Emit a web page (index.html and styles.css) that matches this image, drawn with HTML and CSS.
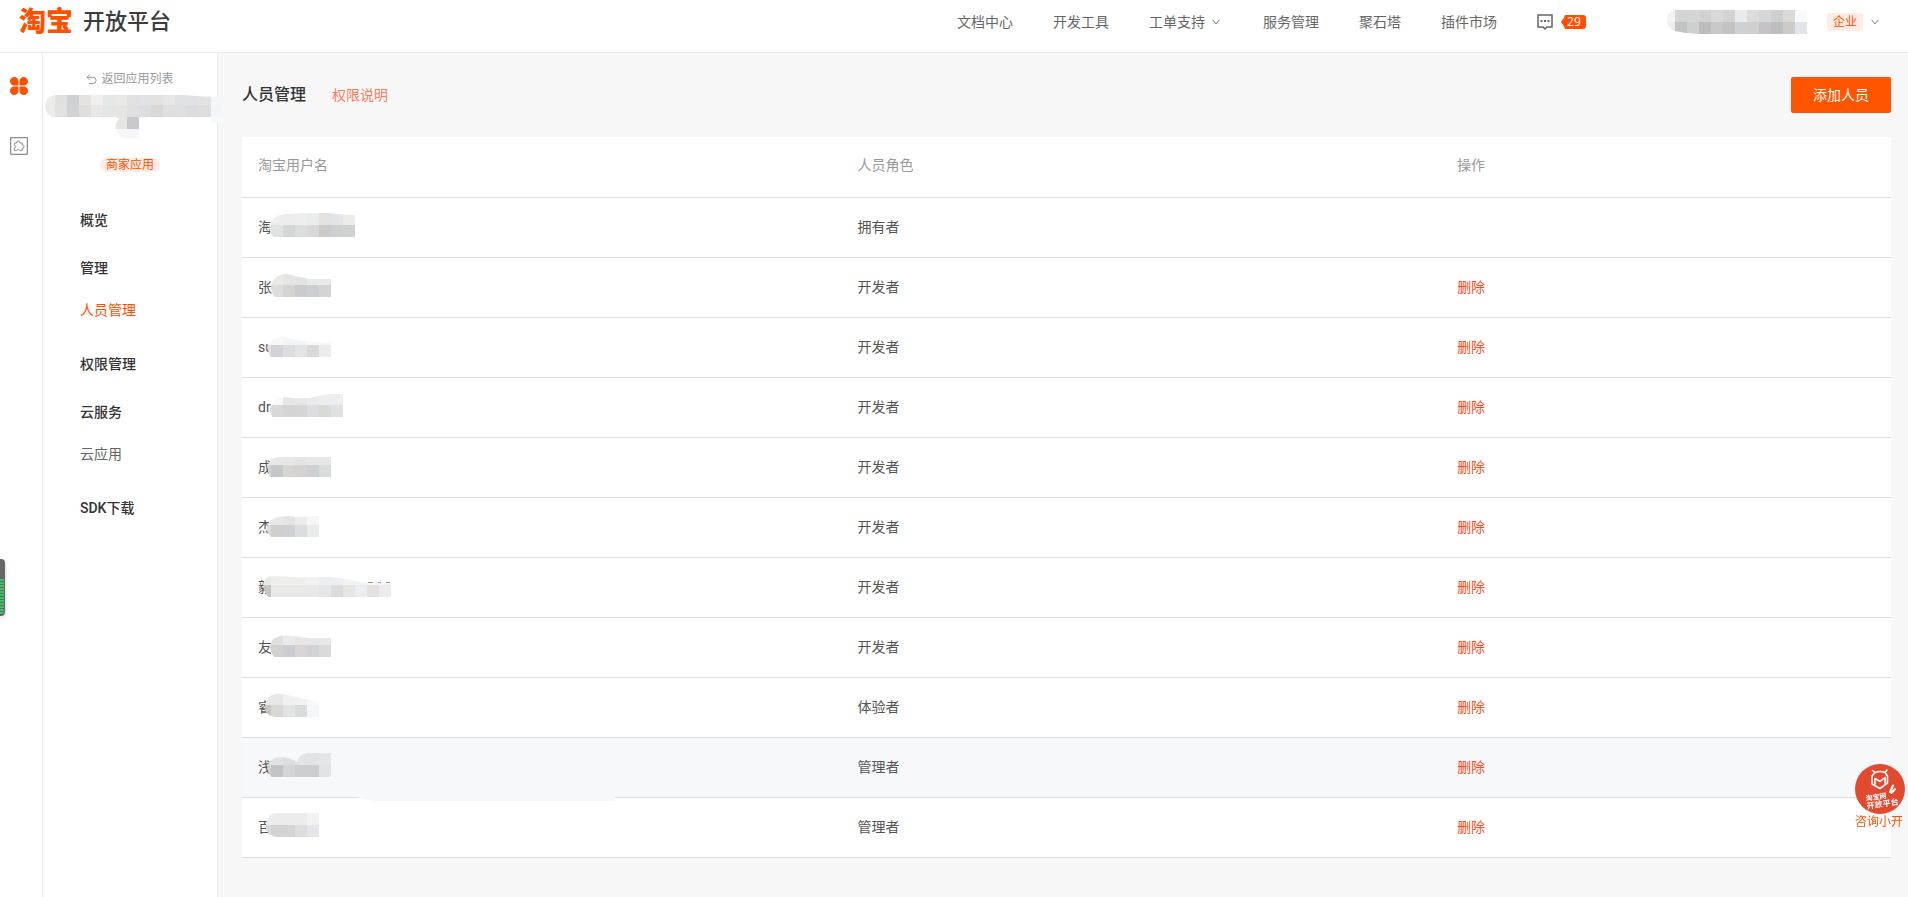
FILE: index.html
```html
<!DOCTYPE html>
<html lang="zh-CN">
<head>
<meta charset="utf-8">
<meta name="viewport" content="width=device-width, initial-scale=1">
<title>人员管理 - 淘宝开放平台</title>
<link rel="stylesheet" href="styles.css">
</head>
<body>
<header class="topbar">
  <a class="brand" href="#"><span class="brand-mark">淘宝</span><span class="brand-name">开放平台</span></a>
  <nav class="topnav" aria-label="主导航">
    <a href="#">文档中心</a>
    <a href="#">开发工具</a>
    <a href="#" class="has-arrow">工单支持<svg class="arrow" viewBox="0 0 8 6"><path d="M.5.8 4 4.8 7.5.8"/></svg></a>
    <a href="#">服务管理</a>
    <a href="#">聚石塔</a>
    <a href="#">插件市场</a>
    <a href="#" class="messages" aria-label="消息 29">
      <svg class="msg-icon" viewBox="0 0 16 16"><path d="M1 1h14v12h-5l-2 2-2-2H1z" fill="none" stroke="#666" stroke-width="1.5"/><path d="M3.500 6h2v2h-2zM7 6h2v2H7zM10.500 6h2v2h-2z" fill="#666"/></svg>
      <span class="count">29</span>
    </a>
  </nav>
  <div class="account">
    <svg class="mosaic" width="144" height="24" aria-hidden="true">
      <clipPath id="c-acc"><path d="M144 0H12Q4 2 4 10Q4 18 12 21Q24 24 36 24H144z"/></clipPath>
      <g clip-path="url(#c-acc)">
        <path stroke="#f4f3f2" d="M0 6h12"/><path stroke="#d4d6d5" d="M12 6h24"/><path stroke="#d1d1d1" d="M36 6h12"/><path stroke="#d9d9d9" d="M48 6h12"/><path stroke="#d3d3d3" d="M60 6h12"/><path stroke="#e9eaec" d="M72 6h12"/><path stroke="#dcdcdc" d="M84 6h12"/><path stroke="#d5d6d8" d="M96 6h12"/><path stroke="#cecfd0" d="M108 6h12"/><path stroke="#dbdad8" d="M120 6h12"/><path stroke="#f8f9fb" d="M132 6h12"/>
        <path stroke="#efeeee" d="M0 18h12"/><path stroke="#c1c4c3" d="M12 18h12"/><path stroke="#cecfcf" d="M24 18h12"/><path stroke="#bfbdbb" d="M36 18h12"/><path stroke="#c6c9c7" d="M48 18h12"/><path stroke="#c5c3c2" d="M60 18h12"/><path stroke="#cdd1d4" d="M72 18h12"/><path stroke="#d1cfce" d="M84 18h12"/><path stroke="#c5c3c3" d="M96 18h12"/><path stroke="#bcbec0" d="M108 18h12"/><path stroke="#cccbc7" d="M120 18h12"/><path stroke="#e2e4e8" d="M132 18h12"/>
      </g>
    </svg>
    <span class="company">企业</span>
    <svg class="arrow" viewBox="0 0 8 6"><path d="M.5.8 4 4.8 7.5.8"/></svg>
  </div>
</header>

<div class="layout">
  <nav class="rail" aria-label="快捷入口">
    <a href="#" aria-label="应用"><svg viewBox="0 0 18 18" fill="#ff5000"><path d="M8.500 8.500H4.250A4.250 4.250 0 1 1 8.500 4.250zM9.500 8.500V4.250A4.250 4.250 0 1 1 13.750 8.500zM8.500 9.500V13.750A4.250 4.250 0 1 1 4.250 9.500zM9.500 9.500H13.750A4.250 4.250 0 1 1 9.500 13.750z"/></svg></a>
    <a href="#" aria-label="插件"><svg viewBox="0 0 18 18" fill="none" stroke="#8c8c8c"><rect x=".6" y=".6" width="16.800" height="16.800" rx="1" stroke-width="1.300"/><path d="M4.500 6h2.300a1.600 1.600 0 1 1 3.100 0h2.300v2.200a1.500 1.500 0 1 1 0 2.900v2.400H9.900a1.600 1.600 0 0 0-3.100 0H4.500v-2.400a1.500 1.500 0 0 0 0-2.900z"/></svg></a>
  </nav>

  <aside class="sidebar">
    <a class="back" href="#"><svg viewBox="0 0 11 11" fill="none" stroke="#999"><path d="M3.500.8 1 3.300l2.500 2.500M1 3.300h6a3 3 0 0 1 0 6.200H3"/></svg>返回应用列表</a>
    <svg class="mosaic app-name" width="180" height="48" aria-hidden="true">
      <clipPath id="c-app"><path d="M12 2H140Q160 4 180 4V30H168V24H96V44Q76 50 73 36Q72 30 76 26L72 24H9Q2 20 2 13Q2 4 12 2z"/></clipPath>
      <g clip-path="url(#c-app)">
        <path stroke="#ececec" d="M0 6h12"/><path stroke="#e0e0df" d="M12 6h12"/><path stroke="#cfd0d3" d="M24 6h12"/><path stroke="#e4e3e2" d="M36 6h12"/><path stroke="#f0f0f0" d="M48 6h12"/><path stroke="#e5e8e8" d="M60 6h12"/><path stroke="#e8e8e7" d="M72 6h12"/><path stroke="#e1e1e2" d="M84 6h12"/><path stroke="#e0e2e5" d="M96 6h12"/><path stroke="#e3e2e1" d="M108 6h12"/><path stroke="#e7e7e7" d="M120 6h12"/><path stroke="#dfe1e4" d="M132 6h24"/><path stroke="#e2e2e2" d="M156 6h12"/><path stroke="#f4f6f8" d="M168 6h12"/>
        <path stroke="#ececec" d="M0 18h12"/><path stroke="#e1e1df" d="M12 18h12"/><path stroke="#d1d2d4" d="M24 18h12"/><path stroke="#dfdedd" d="M36 18h12"/><path stroke="#e7e7e6" d="M48 18h12"/><path stroke="#e2e5e4" d="M60 18h12"/><path stroke="#e5e5e3" d="M72 18h12"/><path stroke="#e0e0e1" d="M84 18h12"/><path stroke="#dddddf" d="M96 18h12"/><path stroke="#d8d8d8" d="M108 18h12"/><path stroke="#dfdfdf" d="M120 18h12"/><path stroke="#dfe0e2" d="M132 18h12"/><path stroke="#dcdcde" d="M144 18h12"/><path stroke="#dfdddd" d="M156 18h12"/><path stroke="#f3f6f9" d="M168 18h12"/>
        <path stroke="#e6e6e5" d="M72 30h12"/><path stroke="#c9c9cb" d="M84 30h12"/><path stroke="#f8f9fa" d="M168 30h12"/><path stroke="#f6f7f9" d="M72 42h24"/>
      </g>
    </svg>
    <span class="app-type">商家应用</span>
    <ul class="menu">
      <li><a class="head" href="#">概览</a></li>
      <li><a class="head" href="#">管理</a>
        <ul><li><a class="sub current" href="#" aria-current="page">人员管理</a></li></ul></li>
      <li><a class="head" href="#">权限管理</a></li>
      <li><a class="head" href="#">云服务</a>
        <ul><li><a class="sub" href="#">云应用</a></li></ul></li>
      <li><a class="head" href="#">SDK下载</a></li>
    </ul>
  </aside>

  <main class="content">
    <div class="page-head">
      <h1>人员管理</h1>
      <a class="help" href="#">权限说明</a>
      <button class="add" type="button">添加人员</button>
    </div>
    <table class="members">
      <colgroup><col class="col-wide"><col class="col-wide"><col></colgroup>
      <thead><tr><th scope="col">淘宝用户名</th><th scope="col">人员角色</th><th scope="col">操作</th></tr></thead>
      <tbody>
        <tr><td><div class="name">海<svg class="mosaic" width="96" height="24" aria-hidden="true"><clipPath id="c1"><path d="M15 24Q10 20 10 12Q14 1 30 1Q50 -1 70 0Q84 2 96 2V24z"/></clipPath><g clip-path="url(#c1)"><path stroke="#f0f0f0" d="M0 6h12"/><path stroke="#ededed" d="M12 6h24"/><path stroke="#eeeeed" d="M36 6h12"/><path stroke="#ebecec" d="M48 6h12"/><path stroke="#e4e3e2" d="M60 6h12"/><path stroke="#e4e5e8" d="M72 6h12"/><path stroke="#ebebe9" d="M84 6h12"/><path stroke="#e0e3e2" d="M0 18h24"/><path stroke="#d5d6d6" d="M24 18h12"/><path stroke="#dcdddd" d="M36 18h12"/><path stroke="#d8d8d9" d="M48 18h12"/><path stroke="#cccbc9" d="M60 18h12"/><path stroke="#cecfd1" d="M72 18h12"/><path stroke="#d0d1d1" d="M84 18h12"/></g></svg></div></td><td>拥有者</td><td></td></tr>
        <tr><td><div class="name">张<svg class="mosaic" width="72" height="24" aria-hidden="true"><clipPath id="c2"><path d="M16 24Q8 14 15 6Q24 -2 36 3L50 6H72V24z"/></clipPath><g clip-path="url(#c2)"><path stroke="#eaeae8" d="M0 6h24"/><path stroke="#e5e5e5" d="M24 6h12"/><path stroke="#e2e2e3" d="M36 6h12"/><path stroke="#e8e9e9" d="M48 6h24"/><path stroke="#dbdcdb" d="M0 18h24"/><path stroke="#d5d4d0" d="M24 18h12"/><path stroke="#cacbcc" d="M36 18h12"/><path stroke="#cdcecf" d="M48 18h12"/><path stroke="#d3d5d4" d="M60 18h12"/></g></svg></div></td><td>开发者</td><td><a href="#">删除</a></td></tr>
        <tr><td><div class="name">su<svg class="mosaic" width="72" height="24" aria-hidden="true"><clipPath id="c3"><path d="M11 24L8 14Q14 2 26 4L40 8L72 10V24z"/></clipPath><g clip-path="url(#c3)"><path stroke="#f8f8f8" d="M0 6h24"/><path stroke="#f3f3f3" d="M24 6h24"/><path stroke="#f8f8f8" d="M48 6h24"/><path stroke="#e0e0e2" d="M0 18h12"/><path stroke="#d2d3d8" d="M12 18h12"/><path stroke="#dddde0" d="M24 18h12"/><path stroke="#e2e5e6" d="M36 18h12"/><path stroke="#dbd9d8" d="M48 18h12"/><path stroke="#ebecee" d="M60 18h12"/></g></svg></div></td><td>开发者</td><td><a href="#">删除</a></td></tr>
        <tr><td><div class="name">dr<svg class="mosaic" width="84" height="24" aria-hidden="true"><clipPath id="c4"><path d="M13 24L11 16Q16 4 26 4Q45 7 60 3L72 1H84V24z"/></clipPath><g clip-path="url(#c4)"><path stroke="#f8f8f8" d="M0 6h24"/><path stroke="#e6e5e5" d="M24 6h12"/><path stroke="#e7e7e7" d="M36 6h12"/><path stroke="#ebebeb" d="M48 6h12"/><path stroke="#ecedef" d="M60 6h24"/><path stroke="#d9d8d9" d="M0 18h24"/><path stroke="#d5d4d5" d="M24 18h12"/><path stroke="#d4d5d7" d="M36 18h12"/><path stroke="#dddde0" d="M48 18h12"/><path stroke="#d9d9d8" d="M60 18h12"/><path stroke="#e0e1e3" d="M72 18h12"/></g></svg></div></td><td>开发者</td><td><a href="#">删除</a></td></tr>
        <tr><td><div class="name">成<svg class="mosaic" width="72" height="24" aria-hidden="true"><clipPath id="c5"><path d="M11 24Q4 8 18 4H72V24z"/></clipPath><g clip-path="url(#c5)"><path stroke="#e8e8e8" d="M0 6h24"/><path stroke="#e8e7e7" d="M24 6h12"/><path stroke="#e5e3e4" d="M36 6h12"/><path stroke="#e6e7e7" d="M48 6h24"/><path stroke="#d5d5d5" d="M0 18h12"/><path stroke="#c6c7c9" d="M12 18h12"/><path stroke="#d5d5d4" d="M24 18h12"/><path stroke="#d5d2d2" d="M36 18h12"/><path stroke="#cdd0d3" d="M48 18h12"/><path stroke="#dadcdb" d="M60 18h12"/></g></svg></div></td><td>开发者</td><td><a href="#">删除</a></td></tr>
        <tr><td><div class="name">杰<svg class="mosaic" width="60" height="24" aria-hidden="true"><clipPath id="c6"><path d="M12 24Q4 14 12 7Q22 1 36 4L60 3V24z"/></clipPath><g clip-path="url(#c6)"><path stroke="#e8e8e8" d="M0 6h24"/><path stroke="#e5e4e5" d="M24 6h12"/><path stroke="#ebeceb" d="M36 6h12"/><path stroke="#f6f6f6" d="M48 6h12"/><path stroke="#d9dad9" d="M0 18h12"/><path stroke="#d0cfcd" d="M12 18h12"/><path stroke="#ced0d4" d="M24 18h12"/><path stroke="#dcdddf" d="M36 18h12"/><path stroke="#e8ebea" d="M48 18h12"/></g></svg></div></td><td>开发者</td><td><a href="#">删除</a></td></tr>
        <tr><td><div class="name">毅<svg class="mosaic" width="132" height="24" aria-hidden="true"><clipPath id="c7"><path d="M9 24Q-2 8 12 3L36 4H72Q90 6 100 9H132V24z"/></clipPath><g clip-path="url(#c7)"><path stroke="#e8e8e8" d="M0 6h12"/><path stroke="#eeeeed" d="M12 6h36"/><path stroke="#f0f2f4" d="M48 6h12"/><path stroke="#eeeff0" d="M60 6h24"/><path stroke="#f1f2f2" d="M84 6h24"/><path stroke="#f6f6f7" d="M108 6h24"/><path stroke="#c3c4c6" d="M0 18h12"/><path stroke="#e9e9e9" d="M12 18h48"/><path stroke="#e5e6e7" d="M60 18h12"/><path stroke="#dcdcdd" d="M72 18h12"/><path stroke="#e7e5e1" d="M84 18h12"/><path stroke="#eaeef1" d="M96 18h12"/><path stroke="#e4e0df" d="M108 18h12"/><path stroke="#ebecef" d="M120 18h12"/></g><path class="residue" d="M109 9.500h5M119 9.500h3M127 9.500h4"/></svg></div></td><td>开发者</td><td><a href="#">删除</a></td></tr>
        <tr><td><div class="name">友<svg class="mosaic" width="72" height="24" aria-hidden="true"><clipPath id="c8"><path d="M15 24Q8 14 14 6Q22 1 34 3L50 5H72V24z"/></clipPath><g clip-path="url(#c8)"><path stroke="#e0e0e0" d="M0 6h24"/><path stroke="#eaeaea" d="M24 6h12"/><path stroke="#e9e5e4" d="M36 6h12"/><path stroke="#e6e7e6" d="M48 6h24"/><path stroke="#d3d1d0" d="M0 18h24"/><path stroke="#cccdd0" d="M24 18h12"/><path stroke="#d9d5d6" d="M36 18h12"/><path stroke="#d1d2d4" d="M48 18h12"/><path stroke="#d9dad9" d="M60 18h12"/></g></svg></div></td><td>开发者</td><td><a href="#">删除</a></td></tr>
        <tr><td><div class="name">睿<svg class="mosaic" width="60" height="24" aria-hidden="true"><clipPath id="c9"><path d="M16 24Q4 22 6 12Q8 -1 24 1L60 9V24z"/></clipPath><g clip-path="url(#c9)"><path stroke="#e8e8e8" d="M0 6h24"/><path stroke="#eff0f2" d="M24 6h12"/><path stroke="#f2f2f1" d="M36 6h12"/><path stroke="#f9f9fb" d="M48 6h12"/><path stroke="#c6c6c6" d="M0 18h12"/><path stroke="#d8d8d5" d="M12 18h12"/><path stroke="#e2e4e3" d="M24 18h12"/><path stroke="#dadcdb" d="M36 18h12"/><path stroke="#f5f6f9" d="M48 18h12"/></g></svg></div></td><td>体验者</td><td><a href="#">删除</a></td></tr>
        <tr class="hovered"><td><div class="name">浅<svg class="mosaic" width="72" height="24" aria-hidden="true"><clipPath id="c10"><path d="M12 24Q4 12 14 6Q24 1 38 9Q40 1 48 0H72V24z"/></clipPath><g clip-path="url(#c10)"><path stroke="#e1e2e2" d="M0 6h24"/><path stroke="#dddedf" d="M24 6h12"/><path stroke="#e2e3e6" d="M36 6h24"/><path stroke="#e5e5e8" d="M60 6h12"/><path stroke="#d2d3d4" d="M0 18h12"/><path stroke="#c3c4c6" d="M12 18h12"/><path stroke="#d5d5d5" d="M24 18h12"/><path stroke="#cdced0" d="M36 18h24"/><path stroke="#e2e3e6" d="M60 18h12"/></g></svg><svg class="smear" width="264" height="12" viewBox="0 0 264 12" aria-hidden="true"><path d="M0 7 24 12H264V0H0z"/></svg></div></td><td>管理者</td><td><a href="#">删除</a></td></tr>
        <tr><td><div class="name">百<svg class="mosaic" width="60" height="24" aria-hidden="true"><clipPath id="c11"><path d="M18 24Q6 22 7 12Q8 0 18 0H60V24z"/></clipPath><g clip-path="url(#c11)"><path stroke="#ececec" d="M0 6h48"/><path stroke="#f2f2f2" d="M48 6h12"/><path stroke="#dadada" d="M0 18h12"/><path stroke="#d5d4d2" d="M12 18h12"/><path stroke="#d3d4d6" d="M24 18h12"/><path stroke="#dddddb" d="M36 18h12"/><path stroke="#e4e5e8" d="M48 18h12"/></g></svg></div></td><td>管理者</td><td><a href="#">删除</a></td></tr>
      </tbody>
    </table>
  </main>
</div>

<div class="meter" aria-hidden="true"></div>
<a class="consult" href="#">
  <svg viewBox="0 0 50 50" aria-hidden="true">
    <circle cx="25" cy="25" r="25" fill="#e2492f"/>
    <g fill="none" stroke="#fff" stroke-width="1.600" stroke-linecap="round" stroke-linejoin="round">
      <path d="M20 8.500Q25 6.500 30 8.500L32.500 12V19L25 24.500 17 20V12zM20 8.500 17.500 6.500M30 8.500 32 6"/>
      <path d="M20 20V14.500L25 17.500 30 13.500V19"/>
      <path d="M35 28 38 21.500M36.500 29 40 25" stroke-width="2"/>
    </g>
    <g fill="#fff" transform="rotate(-8 25 36)"><text x="11" y="35" class="seal-small">淘宝网</text><text x="11" y="43" class="seal-big">开放平台</text></g>
  </svg>
  <span>咨询小开</span>
</a>
</body>
</html>
```
FILE: styles.css
```css
* { box-sizing: border-box; }

body {
  margin: 0;
  min-height: 100vh;
  display: flex;
  flex-direction: column;
  background: #f7f7f7;
  color: #555;
  font: 14px/24px Roboto, "Noto Sans CJK SC", sans-serif;
}

a { color: inherit; text-decoration: none; }
ul { list-style: none; margin: 0; padding: 0; }
svg { display: block; flex: none; }

/* Top bar */
.topbar {
  display: flex;
  align-items: center;
  height: 53px;
  padding: 0 29px 8px 19px;
  background: #fff;
  border-bottom: 1px solid #ebebeb;
}
.brand { display: flex; align-items: center; gap: 10px; white-space: nowrap; }
.brand-mark { color: #ff5000; font-size: 27px; font-weight: 900; }
.brand-name { color: #3c3c3c; font-size: 22px; font-weight: 500; }
.topnav { display: flex; align-items: center; gap: 40px; margin-left: auto; color: #666; white-space: nowrap; }
.has-arrow { display: flex; align-items: center; gap: 7px; padding-right: 3px; }
.arrow { width: 8px; height: 6px; fill: none; stroke: #777; }
.messages { display: flex; align-items: center; gap: 8px; }
.msg-icon { width: 16px; height: 16px; }
.count {
  width: 25px;
  height: 14px;
  padding-left: 1px;
  background: #ff5000;
  border-radius: 3px;
  clip-path: polygon(0 50%, 3px 20%, 4px 0, 100% 0, 100% 100%, 4px 100%, 3px 80%);
  color: #fff;
  font-family: "Open Sans", sans-serif;
  font-size: 12px;
  line-height: 14px;
  text-align: center;
}
.account { display: flex; align-items: center; margin-left: 77px; }
.company {
  margin: 0 8px 0 20px;
  padding: 0 6px;
  background: #ffede5;
  border-radius: 3px;
  color: #ff5000;
  font-size: 12px;
  line-height: 18px;
}

/* Masked names */
.mosaic { stroke-width: 12px; }
.mosaic .residue { stroke: #999; stroke-width: 1px; }

.layout { flex: 1; display: flex; }

/* Icon rail */
.rail {
  flex: none;
  width: 43px;
  padding: 24px 0 0 10px;
  background: #fff;
  border-right: 1px solid #ebebeb;
}
.rail a { display: block; margin-bottom: 42px; }
.rail svg { width: 18px; height: 18px; }

/* Sidebar */
.sidebar {
  flex: none;
  width: 175px;
  padding-top: 14px;
  background: #fff;
  border-right: 1px solid #ebebeb;
}
.back {
  display: flex;
  justify-content: center;
  align-items: center;
  gap: 4px;
  color: #999;
  font-size: 12px;
}
.back svg { width: 11px; height: 11px; }
.app-name { position: relative; margin-top: 2px; }
.app-type {
  display: block;
  width: 60px;
  margin: 17px auto 24px;
  background: #ffede5;
  border-radius: 7px;
  color: #ff5000;
  font-size: 12px;
  line-height: 14px;
  text-align: center;
}
.menu a { display: block; padding-left: 37px; }
.menu .head { color: #333; font-weight: 500; line-height: 48px; }
.menu ul { margin-bottom: 12px; }
.menu .sub { color: #666; line-height: 36px; }
.menu .current { color: #ff5000; }

/* Content */
.content { flex: 1; min-width: 0; padding: 24px 17px 24px 24px; }
.page-head { display: flex; align-items: center; height: 36px; margin-bottom: 24px; }
.page-head h1 { margin: 0; color: #333; font-size: 16px; font-weight: 500; }
.help { margin-left: 26px; color: #ff7a5c; }
.add {
  width: 100px;
  height: 36px;
  margin-left: auto;
  border: 0;
  border-radius: 2px;
  background: #ff5500;
  color: #fff;
  font: inherit;
}

.members { width: 100%; table-layout: fixed; border-collapse: separate; border-spacing: 0; background: #fff; }
.col-wide { width: 36.36%; }
.members th, .members td {
  padding: 15px 16px;
  border-bottom: 1px solid #dcdee3;
  line-height: 29px;
  text-align: left;
  font-weight: 400;
}
.members th { padding: 14px 16px 18px; color: #999; line-height: 28px; }
.members td { height: 60px; }
.members td a { color: #ff4a1c; }
.members .hovered td { background: #f7f8fa; }
.name { position: relative; }
.name .mosaic { position: absolute; top: 0; left: 1px; }
.smear { position: absolute; top: 36px; left: 93px; fill: #f7f8fa; }

/* Floating widgets */
.meter {
  position: fixed;
  left: 0;
  top: 559px;
  width: 5px;
  height: 57px;
  border: solid #666;
  border-width: 20px 1px 1px 0;
  border-radius: 0 4px 4px 0;
  background: repeating-linear-gradient(#3fbf6c 0 2px, #666 2px 3px);
  box-shadow: 0 1px 4px #ccc;
}
.consult {
  position: fixed;
  right: 3px;
  bottom: 67px;
  width: 50px;
  color: #ff5000;
  font-size: 12px;
  line-height: 16px;
  white-space: nowrap;
}
.consult svg { width: 50px; height: 50px; }
.seal-small { font-size: 7px; font-weight: 700; }
.seal-big { font-size: 8px; font-weight: 700; }
```
